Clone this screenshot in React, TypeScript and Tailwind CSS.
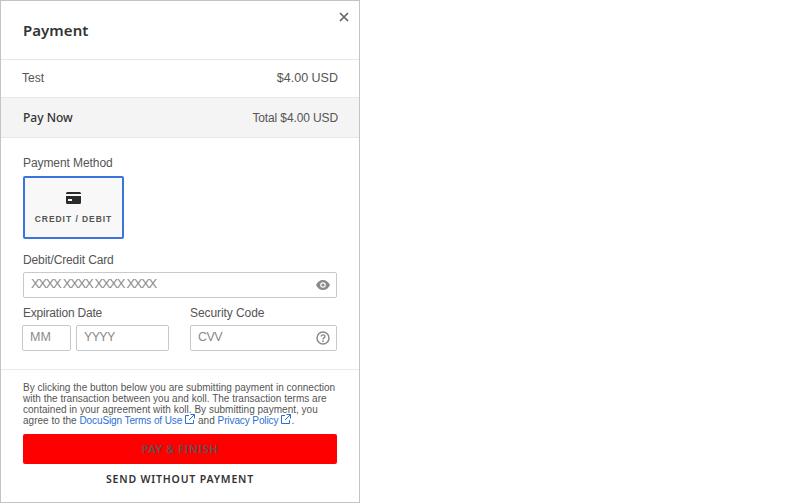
import React from "react";

const body = "font-['Liberation_Sans',Arial,sans-serif]";
const head = "font-['Noto_Sans',sans-serif]";

function Ext() {
  return (
    <svg width="10" height="10" viewBox="0 0 10 10" fill="none" stroke="#2b6fd6" strokeWidth="1" className="inline-block ml-[3px] -my-[3px] align-[3px]">
      <path d="M4 1.500H.5v8h8V6" />
      <path d="M5.500.5h4v4M9.500.5 4 6" />
    </svg>
  );
}

export default function App() {
  return (
    <div className={`${body} w-[360px] h-[503px] bg-white border border-[#c4c4c4] relative flex flex-col text-[#333]`}>
      <button className="absolute top-[10px] right-[9px] w-[12px] h-[12px]" aria-label="Close">
        <svg viewBox="0 0 12 12" width="12" height="12" stroke="#666" strokeWidth="1.700" fill="none">
          <path d="M2 2l8 8M10 2l-8 8" />
        </svg>
      </button>

      <div className="h-[59px] shrink-0 border-b border-[#e6e6e6] pl-[22px] flex items-start pt-[18px]">
        <h1 className={`${head} text-[15px] leading-[22px] font-semibold tracking-[0.05px] text-[#333]`}>Payment</h1>
      </div>

      <div className="h-[38px] shrink-0 border-b border-[#e6e6e6] pl-[21px] pr-[21px] flex justify-between items-center text-[12.5px] text-[#555]">
        <span className="-mt-[1px] text-[12px]">Test</span>
        <span>$4.00 USD</span>
      </div>

      <div className="h-[40px] shrink-0 border-b border-[#e6e6e6] bg-[#f4f4f4] pl-[22px] pr-[21px] flex justify-between items-center text-[12px]">
        <span className={`${head} font-medium text-[12px] text-[#333]`}>Pay Now</span>
        <span className="text-[#555] tracking-[-0.12px]">Total $4.00 USD</span>
      </div>

      <div className="px-[22px] pt-[18px] shrink-0 h-[232px] border-b border-[#e9e9e9]">
        <div className="text-[12px] leading-[15px] text-[#555] tracking-[-0.08px]">Payment Method</div>
        <div className="mt-[5px] w-[101px] h-[63px] border-2 border-[#3a75de] rounded-[2px] bg-[#f8f8f8] flex flex-col items-center pt-[14px]">
          <svg width="15" height="12" viewBox="0 0 15 12">
            <path d="M1.500 0h12A1.500 1.500 0 0 1 15 1.500V2H0v-.5A1.500 1.500 0 0 1 1.500 0ZM0 4h15v6.500a1.500 1.500 0 0 1-1.500 1.500h-12A1.500 1.500 0 0 1 0 10.500V4Zm2 3v2h4V7H2Z" fill="#2a2a2a" />
          </svg>
          <span className="mt-[10px] text-[8.5px] leading-[10px] font-bold tracking-[0.95px] text-[#555] whitespace-nowrap">CREDIT / DEBIT</span>
        </div>

        <div className="mt-[14px] text-[12px] leading-[15px] text-[#555] tracking-[-0.12px]">Debit/Credit Card</div>
        <div className="mt-[4px] h-[26px] w-[314px] border border-[#c9c9c9] rounded-[2px] flex items-center justify-between pl-[7px] pr-[6px] text-[13px] text-[#8a8a8a] tracking-[-1.3px]">
          <span className="-mt-[2px]">XXXX XXXX XXXX XXXX</span>
          <svg width="14" height="10" viewBox="0 0 14 10">
            <path fillRule="evenodd" d="M7 0c3 0 5.600 2 7 5-1.400 3-4 5-7 5S1.400 8 0 5c1.400-3 4-5 7-5Zm0 2.200a2.800 2.800 0 1 0 0 5.600 2.800 2.800 0 0 0 0-5.600Z" fill="#8a8a8a" />
            <circle cx="7" cy="5" r="1.600" fill="#8a8a8a" />
          </svg>
        </div>

        <div className="mt-[8px] flex -ml-[1px]">
          <div className="w-[168px] shrink-0">
            <div className="pl-[1px] text-[12px] leading-[15px] text-[#555] tracking-[-0.2px]">Expiration Date</div>
            <div className="mt-[4px] flex gap-[5px]">
              <div className="w-[49px] h-[26px] border border-[#c9c9c9] rounded-[2px] pl-[7px] pb-[2px] flex items-center text-[12.5px] text-[#8a8a8a]">MM</div>
              <div className="w-[93px] h-[26px] border border-[#c9c9c9] rounded-[2px] pl-[7px] pb-[2px] flex items-center text-[12.5px] text-[#8a8a8a] tracking-[-0.7px]">YYYY</div>
            </div>
          </div>
          <div className="w-[147px] shrink-0">
            <div className="text-[12px] leading-[15px] text-[#555] tracking-[-0.08px]">Security Code</div>
            <div className="mt-[4px] w-[147px] h-[26px] border border-[#c9c9c9] rounded-[2px] pl-[7px] pr-[6px] flex items-center justify-between text-[12.5px] text-[#8a8a8a]">
              <span className="tracking-[-0.5px] -mt-[2px]">CVV</span>
              <svg width="14" height="14" viewBox="0 0 14 14" fill="none">
                <circle cx="7" cy="7" r="6" stroke="#8a8a8a" strokeWidth="1.500" />
                <path d="M5.100 5.500C5.200 4.400 6 3.900 7 3.900c1.100 0 1.900.7 1.900 1.600 0 1.400-1.900 1.400-1.900 2.900" stroke="#8a8a8a" strokeWidth="1.400" />
                <circle cx="7" cy="10.200" r=".9" fill="#8a8a8a" />
              </svg>
            </div>
          </div>
        </div>
      </div>

      <div className="px-[22px] pt-[12px]">
        <p className="text-[10px] leading-[11px] text-[#555] h-[44px] tracking-[0.02px]">
          By clicking the button below you are submitting payment in connection with the transaction between you and koll. The transaction terms are contained in your agreement with koll. By submitting payment, you agree to the{" "}
          <span className="text-[#2b6fd6] tracking-[-0.1px]">DocuSign Terms of Use<Ext /></span> and{" "}
          <span className="text-[#2b6fd6] tracking-[-0.1px]">Privacy Policy<Ext /></span>.
        </p>
        <button className={`${head} mt-[8px] w-[314px] h-[30px] bg-[#ff0000] rounded-[2px] text-[11px] font-semibold tracking-[0.5px] text-[#555]`}>PAY &amp; FINISH</button>
        <div className={`${head} mt-[8px] text-center text-[10.500px] leading-[15px] font-semibold tracking-[0.82px] text-[#333]`}>SEND WITHOUT PAYMENT</div>
      </div>
    </div>
  );
}
